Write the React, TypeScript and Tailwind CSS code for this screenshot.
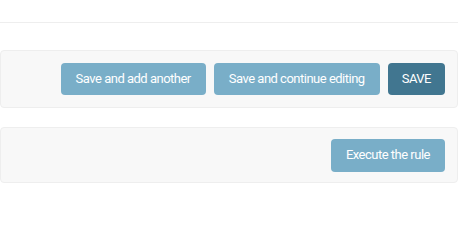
const SubmitRow = () => {
  return (
    <div className="h-[58px] flex items-center justify-end gap-2 pr-3 bg-[#f8f8f8] border border-[#eeeeee] rounded">
      <button className="h-8 px-[15px] rounded bg-[#79aec8] text-white text-[13px] tracking-[-0.5px]">
        Save and add another
      </button>
      <button className="h-8 px-[15px] rounded bg-[#79aec8] text-white text-[13px] tracking-[-0.5px]">
        Save and continue editing
      </button>
      <button className="h-8 px-[14px] rounded bg-[#417690] text-white text-[13px] tracking-[-0.5px]">
        SAVE
      </button>
    </div>
  );
};

const RuleRow = () => {
  return (
    <div className="h-[56px] flex items-center justify-end pr-3 bg-[#f8f8f8] border border-[#eeeeee] rounded">
      <button className="h-[33px] px-[15px] rounded bg-[#79aec8] text-white text-[13px] tracking-[-0.5px]">
        Execute the rule
      </button>
    </div>
  );
};

export default function App() {
  return (
    <div
      className="w-[474px] h-[209px] bg-white overflow-hidden"
      style={{ fontFamily: "Roboto, 'Liberation Sans', sans-serif" }}
    >
      <div className="w-[458px]">
        <div className="h-[23px] border-b border-[#eeeeee]" />
        <div className="mt-[27px]">
          <SubmitRow />
        </div>
        <div className="mt-[19px]">
          <RuleRow />
        </div>
      </div>
    </div>
  );
}
